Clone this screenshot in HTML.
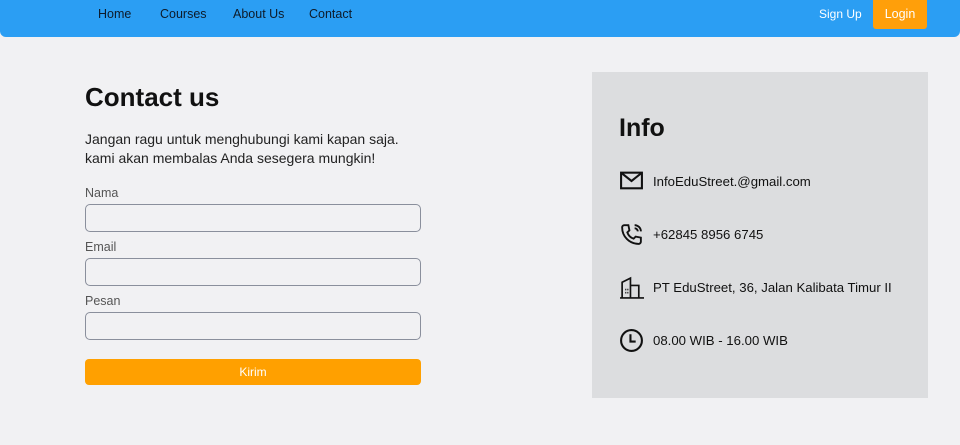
<!DOCTYPE html>
<html><head><style>
*{margin:0;padding:0;box-sizing:border-box}
body{width:960px;height:445px;background:#f1f1f3;font-family:"Liberation Sans",sans-serif;position:relative;overflow:hidden;color:#111}
.nav{position:absolute;left:0;top:0;width:960px;height:37px;background:#2b9ef3;border-bottom-left-radius:6px;border-bottom-right-radius:6px}
.nav a{position:absolute;top:7px;font-size:12.5px;color:#0d1b2a}
.login{position:absolute;left:873px;top:0;width:54px;height:29px;background:#ff9f0a;color:#fff;font-size:12.5px;text-align:center;line-height:28px;border-radius:0 0 3px 3px}
h1{position:absolute;left:85px;top:82px;font-size:26px;font-weight:bold}
.p{position:absolute;left:85px;top:130px;font-size:14px;line-height:19px;color:#222}
.lbl{position:absolute;left:85px;font-size:12.5px;color:#555}
.in{position:absolute;left:85px;width:336px;height:28px;border:1px solid #8a8f9c;border-radius:5px;background:#f1f1f3}
.btn{position:absolute;left:85px;top:359px;width:336px;height:26px;background:#ffa000;border-radius:4px;color:#fff;font-size:12px;text-align:center;line-height:26px}
.info{position:absolute;left:592px;top:72px;width:336px;height:326px;background:#dcdddf}
.info h2{position:absolute;left:27px;top:42px;font-size:25px;font-weight:bold}
.row{position:absolute;left:27px;font-size:13.2px;color:#111;display:flex;align-items:center}
.row svg{margin-right:9px}
</style></head><body>
<div class="nav">
<a style="left:98px">Home</a><a style="left:160px">Courses</a><a style="left:233px">About Us</a><a style="left:309px">Contact</a>
<a style="left:819px;color:#fff;font-size:12px">Sign Up</a>
</div>
<div class="login">Login</div>
<h1>Contact us</h1>
<div class="p">Jangan ragu untuk menghubungi kami kapan saja.<br>kami akan membalas Anda sesegera mungkin!</div>
<div class="lbl" style="top:186px">Nama</div><div class="in" style="top:204px"></div>
<div class="lbl" style="top:240px">Email</div><div class="in" style="top:258px"></div>
<div class="lbl" style="top:294px">Pesan</div><div class="in" style="top:312px"></div>
<div class="btn">Kirim</div>
<div class="info"><h2>Info</h2>
<div class="row" style="top:98px"><svg width="25" height="22" viewBox="0 0 24 20" fill="none" stroke="#111" stroke-width="2"><rect x="2" y="2" width="20" height="15"/><path d="M2 2l10 8 10-8"/></svg>InfoEduStreet.@gmail.com</div>
<div class="row" style="top:150px"><svg width="25" height="25" viewBox="0 0 24 24" fill="none" stroke="#111" stroke-width="1.8"><path d="M5 3l4 0 1 5-2 2c1 3 3 5 6 6l2-2 5 1v4c0 1-1 2-2 2C10 21 3 14 3 5c0-1 1-2 2-2z"/><path d="M15 3a6 6 0 0 1 6 6M15 6a3 3 0 0 1 3 3"/></svg>+62845 8956 6745</div>
<div class="row" style="top:203px"><svg width="25" height="25" viewBox="0 0 24 24" fill="none" stroke="#111" stroke-width="1.6"><path d="M1 22h23M3 22V7l8-4v19M11 10h8v12"/><path d="M6 14h1M8 14h1M6 17h1M8 17h1"/></svg>PT EduStreet, 36, Jalan Kalibata Timur II</div>
<div class="row" style="top:256px"><svg width="25" height="25" viewBox="0 0 24 24" fill="none" stroke="#111" stroke-width="2"><circle cx="12" cy="12" r="10"/><path d="M11 6v7h5"/></svg>08.00 WIB - 16.00 WIB</div>
</div>
</body></html>
